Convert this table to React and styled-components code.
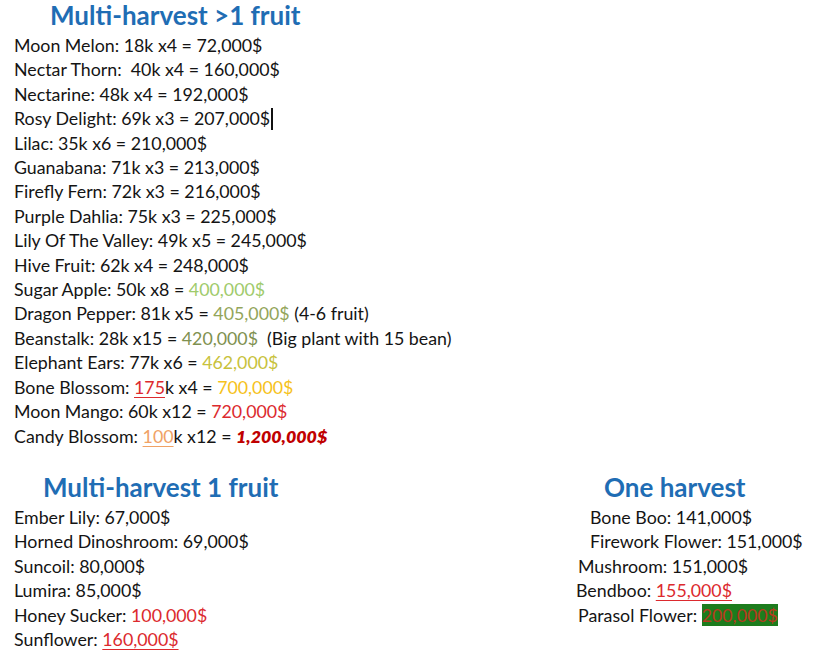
import React from 'react'
import styled, { createGlobalStyle } from 'styled-components'

const GlobalStyle = createGlobalStyle`
  html, body {
    margin: 0;
    padding: 0;
    background: #fff;
  }
  body {
    font-family: Lato, 'Liberation Sans', sans-serif;
    color: #141414;
  }
`

const tones = {
  plain: 'inherit',
  lime: '#9fcb6c',
  olive: '#93a55a',
  moss: '#7f9150',
  mustard: '#c8c23c',
  gold: '#f6c21c',
  red: '#dc2a2e',
  orange: '#f0a265',
  crimson: '#c00000',
  rust: '#b8391f',
}

const topRows = [
  [['Moon Melon: 18k x4 = 72,000$']],
  [['Nectar Thorn:  40k x4 = 160,000$']],
  [['Nectarine: 48k x4 = 192,000$']],
  [['Rosy Delight: 69k x3 = 207,000$'], ['', 'caret']],
  [['Lilac: 35k x6 = 210,000$']],
  [['Guanabana: 71k x3 = 213,000$']],
  [['Firefly Fern: 72k x3 = 216,000$']],
  [['Purple Dahlia: 75k x3 = 225,000$']],
  [['Lily Of The Valley: 49k x5 = 245,000$']],
  [['Hive Fruit: 62k x4 = 248,000$']],
  [['Sugar Apple: 50k x8 = '], ['400,000$', 'lime']],
  [['Dragon Pepper: 81k x5 = '], ['405,000$', 'olive'], [' (4-6 fruit)']],
  [['Beanstalk: 28k x15 = '], ['420,000$', 'moss'], ['  (Big plant with 15 bean)']],
  [['Elephant Ears: 77k x6 = '], ['462,000$', 'mustard']],
  [['Bone Blossom: '], ['175', 'red', 'line'], ['k x4 = '], ['700,000$', 'gold']],
  [['Moon Mango: 60k x12 = '], ['720,000$', 'red']],
  [['Candy Blossom: '], ['100', 'orange', 'line'], ['k x12 = '], ['1,200,000$', 'crimson', 'strong']],
]

const multiRows = [
  [['Ember Lily: 67,000$']],
  [['Horned Dinoshroom: 69,000$']],
  [['Suncoil: 80,000$']],
  [['Lumira: 85,000$']],
  [['Honey Sucker: '], ['100,000$', 'red']],
  [['Sunflower: '], ['160,000$', 'red', 'line']],
]

const oneRows = [
  { indent: 14, parts: [['Bone Boo: 141,000$']] },
  { indent: 14, parts: [['Firework Flower: 151,000$']] },
  { indent: 2, parts: [['Mushroom: 151,000$']] },
  { indent: 0, parts: [['Bendboo: '], ['155,000$', 'red', 'line']] },
  { indent: 2, parts: [['Parasol Flower: '], ['200,000$', 'rust', 'mark']] },
]

function Row({ parts, indent = 0 }) {
  return (
    <Line $indent={indent}>
      {parts.map(([text, tone = 'plain', style], i) =>
        tone === 'caret' ? (
          <Caret key={i} />
        ) : (
          <Piece key={i} $tone={tone} $style={style}>
            {text}
          </Piece>
        )
      )}
    </Line>
  )
}

export default function App() {
  return (
    <Page>
      <GlobalStyle />
      <Section>
        <Heading $indent={36}>Multi-harvest &gt;1 fruit</Heading>
        {topRows.map((parts, i) => (
          <Row key={i} parts={parts} />
        ))}
      </Section>
      <Bottom>
        <Section>
          <Heading $indent={29}>Multi-harvest 1 fruit</Heading>
          {multiRows.map((parts, i) => (
            <Row key={i} parts={parts} />
          ))}
        </Section>
        <Section>
          <Heading $indent={28}>One harvest</Heading>
          {oneRows.map((row, i) => (
            <Row key={i} parts={row.parts} indent={row.indent} />
          ))}
        </Section>
      </Bottom>
    </Page>
  )
}

const Page = styled.div`
  width: 817px;
  height: 656px;
  box-sizing: border-box;
  padding: 1px 0 0 14px;
  overflow: hidden;
`

const Section = styled.div`
  display: flex;
  flex-direction: column;
`

const Bottom = styled.div`
  display: grid;
  grid-template-columns: 562px 1fr;
  margin-top: 25px;
`

const Heading = styled.h2`
  margin: 0 0 4px;
  padding-left: ${p => p.$indent}px;
  font-size: 26px;
  line-height: 28px;
  font-weight: 700;
  color: #1f6db4;
`

const Line = styled.div`
  padding-left: ${p => p.$indent}px;
  font-size: 17.8px;
  line-height: 24.4px;
  white-space: pre;
`

const Piece = styled.span`
  color: ${p => tones[p.$tone]};
  text-decoration: ${p => (p.$style === 'line' ? 'underline' : 'none')};
  text-underline-offset: 3px;
  font-weight: ${p => (p.$style === 'strong' ? 800 : 400)};
  font-style: ${p => (p.$style === 'strong' ? 'italic' : 'normal')};
  background: ${p => (p.$style === 'mark' ? '#1d7c1d' : 'transparent')};
`

const Caret = styled.span`
  display: inline-block;
  width: 2px;
  height: 22px;
  margin-left: 1px;
  vertical-align: -5px;
  background: #111;
`
